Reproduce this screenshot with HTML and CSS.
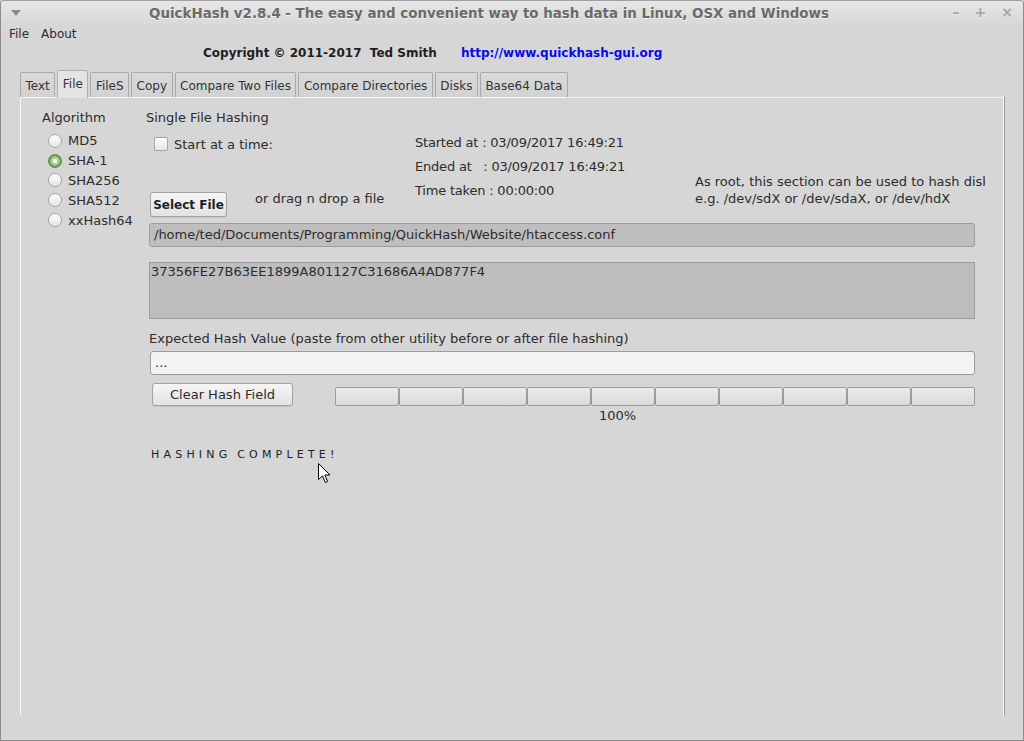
FILE: index.html
```html
<!DOCTYPE html>
<html lang="en">
<head>
  <meta charset="UTF-8">
  <title>QuickHash v2.8.4</title>
  <link rel="stylesheet" href="styles.css">
</head>
<body>
  <div class="window">
    <!-- 标题栏 -->
    <header class="titlebar">
      <span class="win-menu"></span>
      <h1 class="win-title">QuickHash v2.8.4 - The easy and convenient way to hash data in Linux, OSX and Windows</h1>
      <div class="win-buttons">
        <span>&#8211;</span><span>+</span><span>&#215;</span>
      </div>
    </header>

    <nav class="menubar">
      <span>File</span>
      <span>About</span>
    </nav>

    <div class="credits">
      <span class="copyright">Copyright &copy; 2011-2017&nbsp; Ted Smith</span>
      <a class="site-link" href="#">http://www.quickhash-gui.org</a>
    </div>

    <ul class="tabs">
      <li>Text</li>
      <li class="is-active">File</li>
      <li>FileS</li>
      <li>Copy</li>
      <li>Compare Two Files</li>
      <li>Compare Directories</li>
      <li>Disks</li>
      <li>Base64 Data</li>
    </ul>

    <section class="panel">
      <div class="algo">
        <div class="algo-title">Algorithm</div>
        <label class="radio"><span class="dot"></span>MD5</label>
        <label class="radio"><span class="dot is-checked"></span>SHA-1</label>
        <label class="radio"><span class="dot"></span>SHA256</label>
        <label class="radio"><span class="dot"></span>SHA512</label>
        <label class="radio"><span class="dot"></span>xxHash64</label>
      </div>

      <div class="main">
        <div class="top">
          <div class="col-left">
            <div class="heading">Single File Hashing</div>
            <label class="check"><span class="box"></span>Start at a time:</label>
            <div class="select-row">
              <button class="btn btn-bold">Select File</button>
              <span class="drag">or drag n drop a file</span>
            </div>
          </div>
          <div class="col-times">
            <div>Started at : 03/09/2017 16:49:21</div>
            <div>Ended at &nbsp; : 03/09/2017 16:49:21</div>
            <div>Time taken : 00:00:00</div>
          </div>
          <div class="col-root">
            <div>As root, this section can be used to hash disks</div>
            <div>e.g. /dev/sdX or /dev/sdaX, or /dev/hdX</div>
          </div>
        </div>

        <div class="field field-path">/home/ted/Documents/Programming/QuickHash/Website/htaccess.conf</div>
        <div class="memo">37356FE27B63EE1899A801127C31686A4AD877F4</div>

        <div class="label">Expected Hash Value (paste from other utility before or after file hashing)</div>
        <div class="field field-input">...</div>

        <div class="action-row">
          <button class="btn btn-clear">Clear Hash Field</button>
          <div class="progress-wrap">
            <div class="progress">
              <span></span><span></span><span></span><span></span><span></span>
              <span></span><span></span><span></span><span></span><span></span>
            </div>
            <div class="percent">100%</div>
          </div>
        </div>

        <div class="status">HASHING COMPLETE!</div>
      </div>

      <!-- 鼠标指针 -->
      <svg class="cursor" width="13" height="21" viewBox="0 0 13 21">
        <path d="M0.5 0.5 L0.5 16.5 L4.5 12.8 L7.3 19.5 L9.6 18.5 L6.9 12 L12 12 Z" fill="#fff" stroke="#000" stroke-width="1" stroke-linejoin="round"/>
      </svg>
    </section>
  </div>
</body>
</html>
```

FILE: styles.css
```css
*,
*::before,
*::after {
  box-sizing: border-box;
}
body {
  margin: 0;
  background: #d6d6d6;
  font-family: "DejaVu Sans", Verdana, sans-serif;
  font-size: 13px;
  color: #2c2c2c;
}

.window {
  height: 741px;
  border: 1px solid #8c8c8c;
  border-top-color: #a0a0a0;
  border-radius: 4px 4px 0 0;
  background: #d6d6d6;
  overflow: hidden;
}

/* 标题栏 */
.titlebar {
  height: 24px;
  display: flex;
  align-items: center;
  position: relative;
  background: linear-gradient(#e6e6e6, #d8d8d8);
}
.win-menu {
  width: 0;
  height: 0;
  margin-left: 10px;
  border-left: 5px solid transparent;
  border-right: 5px solid transparent;
  border-top: 6px solid #8a8a8a;
}
.win-title {
  flex: 1;
  margin: 0;
  text-align: center;
  font-size: 13.4px;
  font-weight: bold;
  color: #6a6a6a;
  text-shadow: 0 1px 0 #f2f2f2;
  padding-right: 66px;
}
.win-buttons {
  position: absolute;
  right: 10px;
  top: 3px;
  display: flex;
  gap: 15px;
  color: #a8a8a8;
  font-size: 14px;
  font-weight: bold;
}

.menubar {
  height: 20px;
  padding: 2px 0 0 8px;
  font-size: 12px;
  display: flex;
  gap: 12px;
}

.credits {
  height: 16px;
  padding: 0 0 0 202px;
  font-size: 12px;
  font-weight: bold;
  display: flex;
  align-items: center;
}
.copyright {
  color: #1e1e1e;
}
.site-link {
  margin-left: 24px;
  color: #0a0ae6;
  text-decoration: none;
}

/* 标签页 */
.tabs {
  display: flex;
  align-items: flex-end;
  gap: 2px;
  list-style: none;
  margin: 0;
  padding: 0 0 0 19px;
  height: 36px;
  font-size: 12px;
}
.tabs li {
  height: 25px;
  padding: 6px 4.5px 0;
  border: 1px solid #a9a9a9;
  border-bottom: 0;
  border-radius: 2px 2px 0 0;
  background: linear-gradient(#d9d9d9, #d2d2d2);
  color: #333;
  white-space: nowrap;
}
.tabs li.is-active {
  height: 28px;
  padding-top: 6px;
  margin-bottom: -1px;
  background: #e4e4e4;
  border-color: #b0b0b0;
  position: relative;
  z-index: 1;
}

.panel {
  position: relative;
  display: flex;
  height: 618px;
  margin: 0 19px 0 19px;
  padding-left: 21px;
  border-top: 1px solid #f4f4f4;
  border-left: 1px solid #fafafa;
  border-right: 1px solid #fafafa;
  box-shadow: 1px 0 0 #9a9a9a;
}

/* 左侧算法选择 */
.algo {
  flex-shrink: 0;
  width: 104px;
  padding-top: 12px;
}
.algo-title {
  height: 18px;
  margin-bottom: 3px;
}
.radio {
  display: flex;
  align-items: center;
  height: 19.8px;
  padding-left: 6px;
}
.dot {
  width: 14px;
  height: 14px;
  margin-right: 6px;
  border: 1px solid #a4a4a4;
  border-radius: 50%;
  background: linear-gradient(#fdfdfd, #e6e6e6);
}
.dot.is-checked {
  border-color: #5e8a42;
  background: radial-gradient(circle, #fff 0 2px, #a9cd8d 2.5px 4.5px, #6f9a52 5px);
}

.main {
  flex: 1;
  min-width: 0;
  padding-right: 28px;
}

.top {
  display: grid;
  grid-template-columns: 269px 280px 290px;
  height: 125px;
}
.heading {
  margin-top: 12px;
  line-height: 16px;
}
.check {
  display: flex;
  align-items: center;
  height: 16px;
  margin-top: 10px;
  padding-left: 8px;
}
.box {
  width: 14px;
  height: 14px;
  margin-right: 6px;
  border: 1px solid #a4a4a4;
  border-radius: 2px;
  background: linear-gradient(#fdfdfd, #e8e8e8);
}
.select-row {
  display: flex;
  align-items: center;
  margin-top: 40px;
  padding-left: 4px;
}
.drag {
  margin-left: 28px;
  margin-top: -12px;
}

.btn {
  font-family: inherit;
  font-size: 13px;
  color: #2c2c2c;
  border: 1px solid #a2a2a2;
  border-radius: 3px;
  background: linear-gradient(#f6f6f6, #e2e2e2);
  box-shadow: 0 1px 0 #c4c4c4;
  padding: 0;
  white-space: nowrap;
}
.btn-bold {
  font-size: 12px;
  font-weight: bold;
  color: #1e1e1e;
  width: 77px;
  height: 25px;
}

.col-times {
  margin-top: 33px;
  line-height: 24px;
  letter-spacing: -0.2px;
}
.col-root {
  margin-top: 75px;
  line-height: 17px;
  white-space: nowrap;
  overflow: hidden;
}

.field {
  height: 24px;
  line-height: 22px;
  border: 1px solid #9c9c9c;
  border-radius: 3px;
  padding-left: 4px;
  white-space: nowrap;
  overflow: hidden;
}
.field-path {
  margin-left: 3px;
  background: #bebebe;
}
.memo {
  height: 57px;
  margin: 15px 0 0 3px;
  padding: 2px 1px;
  border: 1px solid #9c9c9c;
  background: #bdbdbd;
  line-height: 14px;
}
.label {
  margin: 12px 0 0 3px;
  line-height: 16px;
}
.field-input {
  margin: 4px 0 0 4px;
  background: #f3f3f3;
}

.action-row {
  display: flex;
  margin-top: 8px;
  padding-left: 6px;
}
.btn-clear {
  width: 141px;
  height: 23px;
}
.progress-wrap {
  flex: 1;
  margin: 4px 0 0 42px;
}
.progress {
  display: flex;
  height: 19px;
}
.progress span {
  flex: 1;
  border: 1px solid #9c9c9c;
  border-radius: 2px;
  background: linear-gradient(#ececec, #d9d9d9);
}
.percent {
  padding: 2px 0 0 264px;
  line-height: 16px;
}

.status {
  margin: 24px 0 0 5px;
  font-size: 11px;
  letter-spacing: 4.2px;
  word-spacing: -2px;
  color: #222;
}

.cursor {
  position: absolute;
  left: 297px;
  top: 365px;
}
```
